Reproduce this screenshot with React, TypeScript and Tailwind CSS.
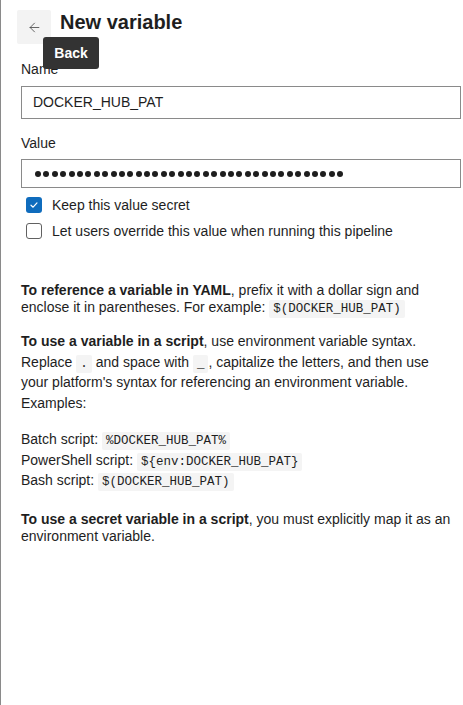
import { ArrowLeft } from "lucide-react"

const font = { fontFamily: "'Liberation Sans', Arial, sans-serif" }

function Code({ children }: { children: React.ReactNode }) {
  return (
    <code className="rounded-[2px] bg-[#f4f4f4] px-[4px] py-[2px] font-['Liberation_Mono',monospace] text-[12.5px] leading-[12px] text-[#1e1e1e]">
      {children}
    </code>
  )
}

function Checkbox({ checked, label }: { checked: boolean; label: string }) {
  return (
    <label className="flex h-[26px] items-center gap-[10px] pl-[5px]">
      {checked ? (
        <span className="flex h-[16px] w-[16px] items-center justify-center rounded-[3px] bg-[#0f6cbd]">
          <svg width="10" height="10" viewBox="0 0 10 10" fill="none">
            <path d="M2 5.2 L4.1 7.2 L8 2.9" stroke="white" strokeWidth="1.2" strokeLinecap="round" strokeLinejoin="round" />
          </svg>
        </span>
      ) : (
        <span className="h-[16px] w-[16px] rounded-[3px] border border-[#616161] bg-white" />
      )}
      <span className="text-[14px] text-[#1e1e1e]">{label}</span>
    </label>
  )
}

export default function App() {
  const dots = Array.from({ length: 37 }, (_, i) => i)

  return (
    <div className="min-h-[705px] w-[463px] border-l border-[#8a8a8a] bg-white" style={font}>
      <div className="pl-[16px] pr-[2px] pt-[10px]">
        <div className="relative flex items-start gap-[9px]">
          <button className="flex h-[34px] w-[34px] items-center justify-center rounded-[2px] bg-[#f3f3f3] text-[#444444]">
            <ArrowLeft size={15} strokeWidth={1.3} />
          </button>
          <h1 className="text-[20px] font-bold leading-[24px] text-[#1e1e1e]">New variable</h1>
          <div className="absolute left-[26px] top-[27px] z-10 flex h-[32px] w-[56px] items-center justify-center rounded-[3px] bg-[#333333] text-[14px] font-bold text-white">
            Back
          </div>
        </div>

        <div className="pl-[4px]">
          <div className="mt-[15px] text-[14px] leading-[20px] text-[#1e1e1e]">Name</div>
          <div className="mt-[7px] flex h-[33px] w-[440px] items-center border border-[#8a8a8a] px-[11px] text-[14px] text-[#1e1e1e]">
            DOCKER_HUB_PAT
          </div>

          <div className="mt-[14px] text-[14px] leading-[20px] text-[#1e1e1e]">Value</div>
          <div className="mt-[6px] flex h-[29px] w-[440px] items-center gap-[2.4px] overflow-hidden border border-[#8a8a8a] px-[13px]">
            {dots.map((i) => (
              <span key={i} className="h-[6px] w-[6px] shrink-0 rounded-full bg-[#1e1e1e]" />
            ))}
          </div>

          <div className="mt-[4px]">
            <Checkbox checked label="Keep this value secret" />
            <Checkbox checked={false} label="Let users override this value when running this pipeline" />
          </div>

          <div className="pr-[8px] text-[14px] text-[#1e1e1e]">
            <p className="mt-[38px] leading-[17px]">
              <b className="font-bold">To reference a variable in YAML</b>, prefix it with a dollar sign and enclose it in parentheses. For example:{" "}
              <Code>$(DOCKER_HUB_PAT)</Code>
            </p>

            <p className="mt-[15px] leading-[20.5px]">
              <b className="font-bold">To use a variable in a script</b>, use environment variable syntax. Replace <Code>.</Code> and space with{" "}
              <Code>_</Code>, capitalize the letters, and then use your platform's syntax for referencing an environment variable. Examples:
            </p>

            <div className="mt-[16px] leading-[20.5px]">
              <div>
                Batch script: <Code>%DOCKER_HUB_PAT%</Code>
              </div>
              <div>
                PowerShell script: <Code>{"${env:DOCKER_HUB_PAT}"}</Code>
              </div>
              <div>
                Bash script: <Code>$(DOCKER_HUB_PAT)</Code>
              </div>
            </div>

            <p className="mt-[20px] leading-[17px]">
              <b className="font-bold">To use a secret variable in a script</b>, you must explicitly map it as an environment variable.
            </p>
          </div>
        </div>
      </div>
    </div>
  )
}
